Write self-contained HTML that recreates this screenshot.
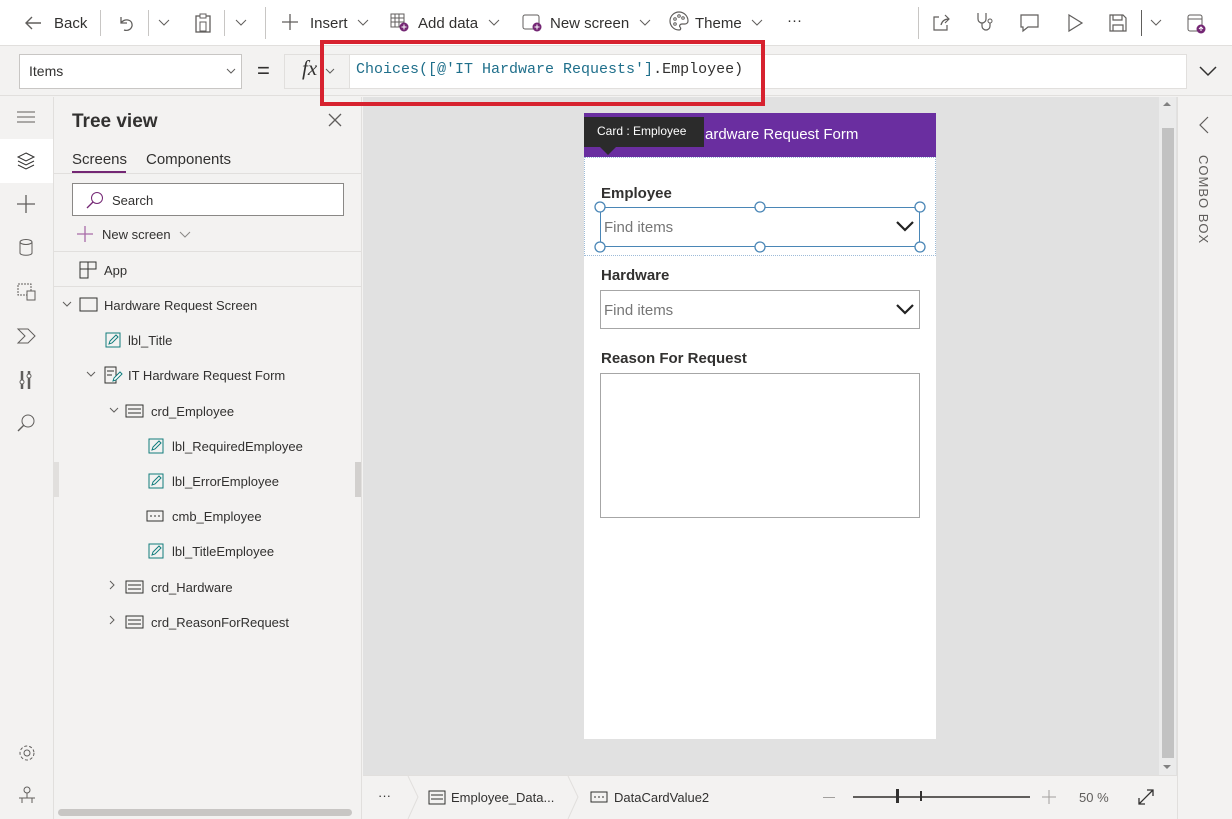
<!DOCTYPE html>
<html><head><meta charset="utf-8"><style>
*{box-sizing:border-box;margin:0;padding:0}
body{width:1232px;height:819px;overflow:hidden;position:relative;font-family:"Segoe UI","Liberation Sans",sans-serif;background:#f3f2f1;color:#323130}
.a{position:absolute}
.t{font-size:15px;color:#323130;white-space:nowrap}
.s{font-size:13px;color:#323130;white-space:nowrap}
svg{position:absolute;overflow:visible}
</style></head><body>
<!-- top toolbar -->
<div class="a" style="left:0;top:0;width:1232px;height:46px;background:#fff;border-bottom:1px solid #e1dfdd"></div>
<svg style="left:24px;top:14px" width="18" height="18"><path d="M17 9H2M8 3L2 9l6 6" stroke="#605e5c" stroke-width="1.4" fill="none"/></svg>
<div class="a t" style="left:54px;top:15px">Back</div>
<div class="a" style="left:100px;top:10px;width:1px;height:26px;background:#c8c6c4"></div>
<svg style="left:117px;top:14px" width="18" height="18"><path d="M4 3v6h6M4 9c3-5 12-4 11 3-1 4-5 5-8 4" stroke="#605e5c" stroke-width="1.3" fill="none"/></svg>
<div class="a" style="left:148px;top:10px;width:1px;height:26px;background:#c8c6c4"></div>
<svg style="left:158px;top:19px" width="12" height="8"><path d="M1 1l5 5 5-5" stroke="#605e5c" fill="none"/></svg>
<svg style="left:195px;top:13px" width="16" height="20"><rect x="1" y="3" width="14" height="16" stroke="#605e5c" fill="none" stroke-width="1.3"/><rect x="5" y="1" width="6" height="4" stroke="#605e5c" fill="#fff"/><rect x="5" y="9" width="6" height="9" stroke="#605e5c" fill="none"/></svg>
<div class="a" style="left:224px;top:10px;width:1px;height:26px;background:#c8c6c4"></div>
<svg style="left:235px;top:19px" width="12" height="8"><path d="M1 1l5 5 5-5" stroke="#605e5c" fill="none"/></svg>
<div class="a" style="left:265px;top:7px;width:1px;height:32px;background:#c8c6c4"></div>
<svg style="left:282px;top:14px" width="16" height="16"><path d="M8 0v16M0 8h16" stroke="#605e5c" stroke-width="1.3"/></svg>
<div class="a t" style="left:310px;top:15px">Insert</div>
<svg style="left:357px;top:19px" width="12" height="8"><path d="M1 1l5 5 5-5" stroke="#605e5c" fill="none"/></svg>
<svg style="left:390px;top:13px" width="20" height="20"><rect x="1" y="1" width="13" height="13" stroke="#605e5c" fill="none"/><path d="M1 5h13M1 9h13M5 1v13M9 1v13" stroke="#605e5c"/><circle cx="14" cy="14" r="4.5" fill="#742774"/><path d="M14 11.5v5M11.5 14h5" stroke="#fff"/></svg>
<div class="a t" style="left:418px;top:15px">Add data</div>
<svg style="left:488px;top:19px" width="12" height="8"><path d="M1 1l5 5 5-5" stroke="#605e5c" fill="none"/></svg>
<svg style="left:522px;top:14px" width="20" height="18"><rect x="1" y="1" width="16" height="14" rx="2" stroke="#605e5c" fill="none"/><circle cx="15" cy="13" r="4.5" fill="#742774"/><path d="M15 10.5v5M12.5 13h5" stroke="#fff"/></svg>
<div class="a t" style="left:550px;top:15px">New screen</div>
<svg style="left:639px;top:19px" width="12" height="8"><path d="M1 1l5 5 5-5" stroke="#605e5c" fill="none"/></svg>
<svg style="left:669px;top:11px" width="20" height="20"><path d="M10 1a9 9 0 1 0 0 18c2 0 2-2 1-3s0-3 2-3h3a3 3 0 0 0 3-3C19 5 15 1 10 1z" stroke="#605e5c" fill="none" stroke-width="1.2"/><circle cx="6" cy="8" r="1.3" stroke="#605e5c" fill="none"/><circle cx="10" cy="5" r="1.3" stroke="#605e5c" fill="none"/><circle cx="14" cy="7" r="1.3" stroke="#605e5c" fill="none"/><circle cx="6" cy="13" r="1.3" stroke="#605e5c" fill="none"/></svg>
<div class="a t" style="left:695px;top:15px">Theme</div>
<svg style="left:751px;top:19px" width="12" height="8"><path d="M1 1l5 5 5-5" stroke="#605e5c" fill="none"/></svg>
<div class="a t" style="left:787px;top:12px">···</div>
<div class="a" style="left:918px;top:7px;width:1px;height:32px;background:#c8c6c4"></div>
<svg style="left:932px;top:14px" width="18" height="18"><path d="M7 3H2v13h13v-5M9 11c1-4 4-6 8-6M13 1l4 4-4 4" stroke="#605e5c" fill="none" stroke-width="1.2"/></svg>
<svg style="left:975px;top:12px" width="20" height="20"><path d="M3 1v6a4 4 0 0 0 8 0V1M7 11v3a4 4 0 0 0 8 0v-3" stroke="#605e5c" fill="none" stroke-width="1.2"/><circle cx="15" cy="9" r="2" stroke="#605e5c" fill="none"/></svg>
<svg style="left:1020px;top:14px" width="20" height="20"><path d="M1 1h17v12H8l-5 4v-4H1z" stroke="#605e5c" fill="none" stroke-width="1.2"/></svg>
<svg style="left:1067px;top:14px" width="16" height="18"><path d="M2 1l13 8-13 8z" stroke="#605e5c" fill="none" stroke-width="1.2"/></svg>
<svg style="left:1109px;top:14px" width="18" height="18"><path d="M1 1h13l3 3v13H1zM4 1v5h9V1M4 17v-6h10v6" stroke="#605e5c" fill="none" stroke-width="1.2"/></svg>
<div class="a" style="left:1141px;top:10px;width:1px;height:26px;background:#605e5c"></div>
<svg style="left:1150px;top:19px" width="12" height="8"><path d="M1 1l5 5 5-5" stroke="#605e5c" fill="none"/></svg>
<svg style="left:1187px;top:14px" width="20" height="20"><rect x="1" y="1" width="14" height="16" rx="2" stroke="#605e5c" fill="none"/><path d="M1 5h14" stroke="#605e5c"/><circle cx="14" cy="15" r="4.5" fill="#742774"/><path d="M14 17v-4M12 15l2-2 2 2" stroke="#fff" fill="none"/></svg>

<!-- formula bar -->
<div class="a" style="left:0;top:47px;width:1232px;height:49px;background:#f3f2f1;border-bottom:1px solid #e1dfdd"></div>
<div class="a" style="left:19px;top:54px;width:223px;height:35px;background:#fff;border:1px solid #c8c6c4"></div>
<div class="a s" style="left:29px;top:63px;font-size:14px">Items</div>
<svg style="left:226px;top:68px" width="10" height="6"><path d="M1 1l4 4 4-4" stroke="#605e5c" fill="none"/></svg>
<div class="a" style="left:257px;top:58px;font-size:22px;color:#323130">=</div>
<div class="a" style="left:284px;top:54px;width:66px;height:35px;background:#f3f2f1;border:1px solid #e1dfdd"></div>
<div class="a" style="left:302px;top:56px;font-family:'Liberation Serif',serif;font-style:italic;font-size:21px;color:#323130">fx</div>
<svg style="left:325px;top:68px" width="10" height="6"><path d="M1 1l4 4 4-4" stroke="#605e5c" fill="none"/></svg>
<div class="a" style="left:349px;top:54px;width:838px;height:35px;background:#fff;border:1px solid #e1dfdd"></div>
<div class="a" style="left:356px;top:61px;font-family:'Liberation Mono',monospace;font-size:15px;color:#1f6f8b;white-space:nowrap">Choices([@'IT Hardware Requests']<span style="color:#323130">.Employee)</span></div>
<svg style="left:1199px;top:66px" width="18" height="10"><path d="M1 1l8 8 8-8" stroke="#323130" stroke-width="1.5" fill="none"/></svg>

<!-- left rail -->
<div class="a" style="left:0;top:97px;width:54px;height:722px;background:#f3f2f1;border-right:1px solid #e1dfdd"></div>
<div class="a" style="left:0;top:139px;width:53px;height:44px;background:#fff"></div>
<svg style="left:17px;top:111px" width="18" height="12"><path d="M0 1h18M0 6h18M0 11h18" stroke="#605e5c"/></svg>
<svg style="left:17px;top:152px" width="18" height="18"><path d="M9 1l8 4-8 4-8-4zM1 9l8 4 8-4M1 13l8 4 8-4" stroke="#323130" fill="none"/></svg>
<svg style="left:17px;top:195px" width="18" height="18"><path d="M9 0v18M0 9h18" stroke="#605e5c" stroke-width="1.3"/></svg>
<svg style="left:19px;top:239px" width="14" height="18"><ellipse cx="7" cy="3" rx="6" ry="2.5" stroke="#605e5c" fill="none"/><path d="M1 3v11c0 3 12 3 12 0V3" stroke="#605e5c" fill="none"/></svg>
<svg style="left:17px;top:283px" width="20" height="18"><rect x="1" y="1" width="13" height="11" stroke="#605e5c" fill="none" stroke-dasharray="2 1"/><rect x="10" y="8" width="8" height="9" stroke="#605e5c" fill="#f3f2f1"/></svg>
<svg style="left:17px;top:328px" width="20" height="16"><path d="M1 1h10l7 7-7 7H1l7-7z" stroke="#605e5c" fill="none"/></svg>
<svg style="left:19px;top:370px" width="14" height="20"><path d="M3 1v18M10 1v18" stroke="#605e5c" stroke-width="2.5"/><circle cx="3" cy="12" r="2" fill="#fff" stroke="#605e5c"/><circle cx="10" cy="6" r="2" fill="#fff" stroke="#605e5c"/></svg>
<svg style="left:17px;top:414px" width="18" height="18"><circle cx="11" cy="7" r="6" stroke="#605e5c" fill="none"/><path d="M7 11L1 17" stroke="#605e5c" stroke-width="1.4"/></svg>
<svg style="left:18px;top:744px" width="18" height="18"><circle cx="9" cy="9" r="3" stroke="#605e5c" fill="none"/><circle cx="9" cy="9" r="7" stroke="#605e5c" fill="none" stroke-dasharray="3 2"/></svg>
<svg style="left:17px;top:786px" width="20" height="18"><circle cx="10" cy="4" r="3" stroke="#605e5c" fill="none"/><path d="M2 12h16M5 12v5M15 12v5M10 7v5" stroke="#605e5c" fill="none"/></svg>

<!-- tree panel -->
<div class="a" style="left:54px;top:97px;width:308px;height:722px;background:#f3f2f1;border-right:1px solid #e1dfdd"></div>
<div class="a" style="left:72px;top:111px;font-size:19px;font-weight:600;color:#323130">Tree view</div>
<svg style="left:328px;top:113px" width="14" height="14"><path d="M1 1l12 12M13 1L1 13" stroke="#605e5c" stroke-width="1.3"/></svg>
<div class="a t" style="left:72px;top:151px">Screens</div>
<div class="a" style="left:72px;top:171px;width:54px;height:2px;background:#742774"></div>
<div class="a t" style="left:146px;top:151px">Components</div>
<div class="a" style="left:54px;top:173px;width:308px;height:1px;background:#e1dfdd"></div>
<div class="a" style="left:72px;top:183px;width:272px;height:33px;background:#fff;border:1px solid #8a8886"></div>
<svg style="left:86px;top:191px" width="18" height="18"><circle cx="11" cy="7" r="5.5" stroke="#742774" fill="none"/><path d="M7 11L1 17" stroke="#742774" stroke-width="1.3"/></svg>
<div class="a s" style="left:112px;top:193px">Search</div>
<svg style="left:77px;top:226px" width="16" height="16"><path d="M8 0v16M0 8h16" stroke="#a86ba8" stroke-width="1.3"/></svg>
<div class="a s" style="left:102px;top:227px">New screen</div>
<svg style="left:179px;top:231px" width="12" height="7"><path d="M1 1l5 5 5-5" stroke="#8a8886" fill="none"/></svg>
<div class="a" style="left:54px;top:251px;width:308px;height:1px;background:#e1dfdd"></div>
<svg style="left:79px;top:261px" width="18" height="18"><path d="M1 1h16v7H9v9H1zM1 8h8M9 1v7" stroke="#323130" fill="none"/></svg>
<div class="a s" style="left:104px;top:263px">App</div>
<div class="a" style="left:54px;top:286px;width:308px;height:1px;background:#e1dfdd"></div>

<svg style="left:62px;top:301px" width="10" height="7"><path d="M1 1l4 4 4-4" stroke="#605e5c" fill="none"/></svg>
<svg style="left:79px;top:297px" width="19" height="15"><rect x="1" y="1" width="17" height="13" stroke="#323130" fill="none"/></svg>
<div class="a s" style="left:104px;top:298px">Hardware Request Screen</div>

<svg style="left:105px;top:332px" width="16" height="16"><rect x="1" y="1" width="14" height="14" stroke="#107c7c" fill="none"/><path d="M4 12l1-3 6-6 2 2-6 6z" stroke="#107c7c" fill="none"/></svg>
<div class="a s" style="left:128px;top:333px">lbl_Title</div>

<svg style="left:86px;top:371px" width="10" height="7"><path d="M1 1l4 4 4-4" stroke="#605e5c" fill="none"/></svg>
<svg style="left:104px;top:366px" width="18" height="18"><path d="M1 1h11v16H1zM3 5h7M3 9h5" stroke="#323130" fill="none"/><path d="M9 15l1-3 6-6 2 2-6 6z" stroke="#107c7c" fill="#fff"/></svg>
<div class="a s" style="left:128px;top:368px">IT Hardware Request Form</div>

<svg style="left:109px;top:407px" width="10" height="7"><path d="M1 1l4 4 4-4" stroke="#605e5c" fill="none"/></svg>
<svg style="left:125px;top:404px" width="19" height="14"><rect x="1" y="1" width="17" height="12" stroke="#323130" fill="none"/><path d="M3 5h13M3 9h13" stroke="#323130"/></svg>
<div class="a s" style="left:151px;top:404px">crd_Employee</div>

<svg style="left:148px;top:438px" width="16" height="16"><rect x="1" y="1" width="14" height="14" stroke="#107c7c" fill="none"/><path d="M4 12l1-3 6-6 2 2-6 6z" stroke="#107c7c" fill="none"/></svg>
<div class="a s" style="left:172px;top:439px">lbl_RequiredEmployee</div>
<div class="a" style="left:54px;top:462px;width:5px;height:35px;background:#e1dfdd"></div>
<div class="a" style="left:355px;top:462px;width:6px;height:35px;background:#d2d0ce"></div>
<svg style="left:148px;top:473px" width="16" height="16"><rect x="1" y="1" width="14" height="14" stroke="#107c7c" fill="none"/><path d="M4 12l1-3 6-6 2 2-6 6z" stroke="#107c7c" fill="none"/></svg>
<div class="a s" style="left:172px;top:474px">lbl_ErrorEmployee</div>
<svg style="left:146px;top:510px" width="18" height="12"><rect x="1" y="1" width="16" height="10" stroke="#323130" fill="none"/><path d="M4 6h2M8 6h2M12 6h2" stroke="#323130"/></svg>
<div class="a s" style="left:172px;top:509px">cmb_Employee</div>
<svg style="left:148px;top:543px" width="16" height="16"><rect x="1" y="1" width="14" height="14" stroke="#107c7c" fill="none"/><path d="M4 12l1-3 6-6 2 2-6 6z" stroke="#107c7c" fill="none"/></svg>
<div class="a s" style="left:172px;top:544px">lbl_TitleEmployee</div>
<svg style="left:109px;top:580px" width="7" height="10"><path d="M1 1l4 4-4 4" stroke="#605e5c" fill="none"/></svg>
<svg style="left:125px;top:580px" width="19" height="14"><rect x="1" y="1" width="17" height="12" stroke="#323130" fill="none"/><path d="M3 5h13M3 9h13" stroke="#323130"/></svg>
<div class="a s" style="left:151px;top:580px">crd_Hardware</div>
<svg style="left:109px;top:615px" width="7" height="10"><path d="M1 1l4 4-4 4" stroke="#605e5c" fill="none"/></svg>
<svg style="left:125px;top:615px" width="19" height="14"><rect x="1" y="1" width="17" height="12" stroke="#323130" fill="none"/><path d="M3 5h13M3 9h13" stroke="#323130"/></svg>
<div class="a s" style="left:151px;top:615px">crd_ReasonForRequest</div>
<div class="a" style="left:58px;top:809px;width:294px;height:7px;background:#c8c6c4;border-radius:4px"></div>

<!-- canvas -->
<div class="a" style="left:363px;top:97px;width:814px;height:678px;background:#e1e1e1"></div>
<div class="a" style="left:1159px;top:97px;width:17px;height:678px;background:#ebebeb"></div>
<div class="a" style="left:1162px;top:128px;width:12px;height:630px;background:#c2c2c2"></div>
<svg style="left:1163px;top:101px" width="8" height="6"><path d="M0 5l4-4 4 4z" fill="#808080"/></svg>
<svg style="left:1163px;top:764px" width="8" height="6"><path d="M0 1l4 4 4-4z" fill="#808080"/></svg>

<!-- phone -->
<div class="a" style="left:584px;top:113px;width:352px;height:626px;background:#fff"></div>
<div class="a" style="left:584px;top:113px;width:352px;height:44px;background:#6a2ea0"></div>
<div class="a" style="left:705px;top:126px;font-size:15px;color:#fff;white-space:nowrap">ardware Request Form</div>
<div class="a" style="left:584px;top:117px;width:120px;height:30px;background:#2b2b2b"></div>
<div class="a" style="left:600px;top:147px;width:0;height:0;border-left:8px solid transparent;border-right:8px solid transparent;border-top:8px solid #2b2b2b"></div>
<div class="a" style="left:597px;top:124px;font-size:12px;color:#fff;white-space:nowrap">Card : Employee</div>
<div class="a" style="left:584px;top:157px;width:352px;height:99px;border:1px dotted #9dbbd8"></div>
<div class="a t" style="left:601px;top:185px;font-weight:600;color:#323130">Employee</div>
<div class="a" style="left:600px;top:207px;width:320px;height:40px;border:1.5px solid #4a86b6"></div>
<div class="a t" style="left:604px;top:219px;color:#767676">Find items</div>
<svg style="left:896px;top:221px" width="18" height="11"><path d="M1 1l8 8 8-8" stroke="#222" stroke-width="2.2" fill="none"/></svg>
<svg style="left:594px;top:201px" width="332" height="52"><g fill="#fff" stroke="#4a86b6" stroke-width="1.3"><circle cx="6" cy="6" r="5"/><circle cx="166" cy="6" r="5"/><circle cx="326" cy="6" r="5"/><circle cx="6" cy="46" r="5"/><circle cx="166" cy="46" r="5"/><circle cx="326" cy="46" r="5"/></g></svg>
<div class="a t" style="left:601px;top:267px;font-weight:600">Hardware</div>
<div class="a" style="left:600px;top:290px;width:320px;height:39px;border:1px solid #a6a6a6"></div>
<div class="a t" style="left:604px;top:302px;color:#767676">Find items</div>
<svg style="left:896px;top:304px" width="18" height="11"><path d="M1 1l8 8 8-8" stroke="#222" stroke-width="2.2" fill="none"/></svg>
<div class="a t" style="left:601px;top:350px;font-weight:600">Reason For Request</div>
<div class="a" style="left:600px;top:373px;width:320px;height:145px;border:1px solid #a6a6a6"></div>

<!-- bottom bar -->
<div class="a" style="left:363px;top:775px;width:814px;height:44px;background:#f3f2f1;border-top:1px solid #e1dfdd"></div>
<div class="a s" style="left:378px;top:788px">···</div>
<svg style="left:388px;top:776px" width="200" height="43"><path d="M20 0l10 21-10 22M180 0l10 21-10 22" stroke="#e1dfdd" fill="none"/></svg>
<svg style="left:428px;top:790px" width="18" height="16"><rect x="1" y="1" width="16" height="13" stroke="#323130" fill="none"/><path d="M3 5h12M3 9h12" stroke="#323130"/></svg>
<div class="a s" style="left:451px;top:790px">Employee_Data...</div>
<svg style="left:590px;top:791px" width="18" height="12"><rect x="1" y="1" width="16" height="10" stroke="#323130" fill="none"/><path d="M4 6h2M8 6h2M12 6h2" stroke="#323130"/></svg>
<div class="a s" style="left:614px;top:790px">DataCardValue2</div>
<div class="a" style="left:823px;top:797px;width:12px;height:1px;background:#a19f9d"></div>
<div class="a" style="left:853px;top:796px;width:177px;height:2px;background:#605e5c"></div>
<div class="a" style="left:896px;top:789px;width:3px;height:14px;background:#323130"></div>
<div class="a" style="left:920px;top:791px;width:2px;height:10px;background:#323130"></div>
<svg style="left:1042px;top:790px" width="14" height="14"><path d="M7 0v14M0 7h14" stroke="#a19f9d"/></svg>
<div class="a s" style="left:1079px;top:790px;color:#605e5c">50 %</div>
<svg style="left:1138px;top:789px" width="16" height="16"><path d="M1 15L15 1M9 1h6v6M1 9v6h6" stroke="#323130" fill="none" stroke-width="1.3"/></svg>

<!-- right panel -->
<div class="a" style="left:1177px;top:97px;width:55px;height:722px;background:#f3f2f1;border-left:1px solid #e1dfdd"></div>
<svg style="left:1199px;top:116px" width="10" height="18"><path d="M9 1L1 9l8 8" stroke="#605e5c" fill="none" stroke-width="1.2"/></svg>
<div class="a" style="left:1196px;top:155px;writing-mode:vertical-rl;font-size:13px;letter-spacing:1px;color:#605e5c">COMBO BOX</div>

<!-- red highlight -->
<div class="a" style="left:320px;top:40px;width:445px;height:66px;border:4px solid #d7222f;z-index:20"></div>
</body></html>
